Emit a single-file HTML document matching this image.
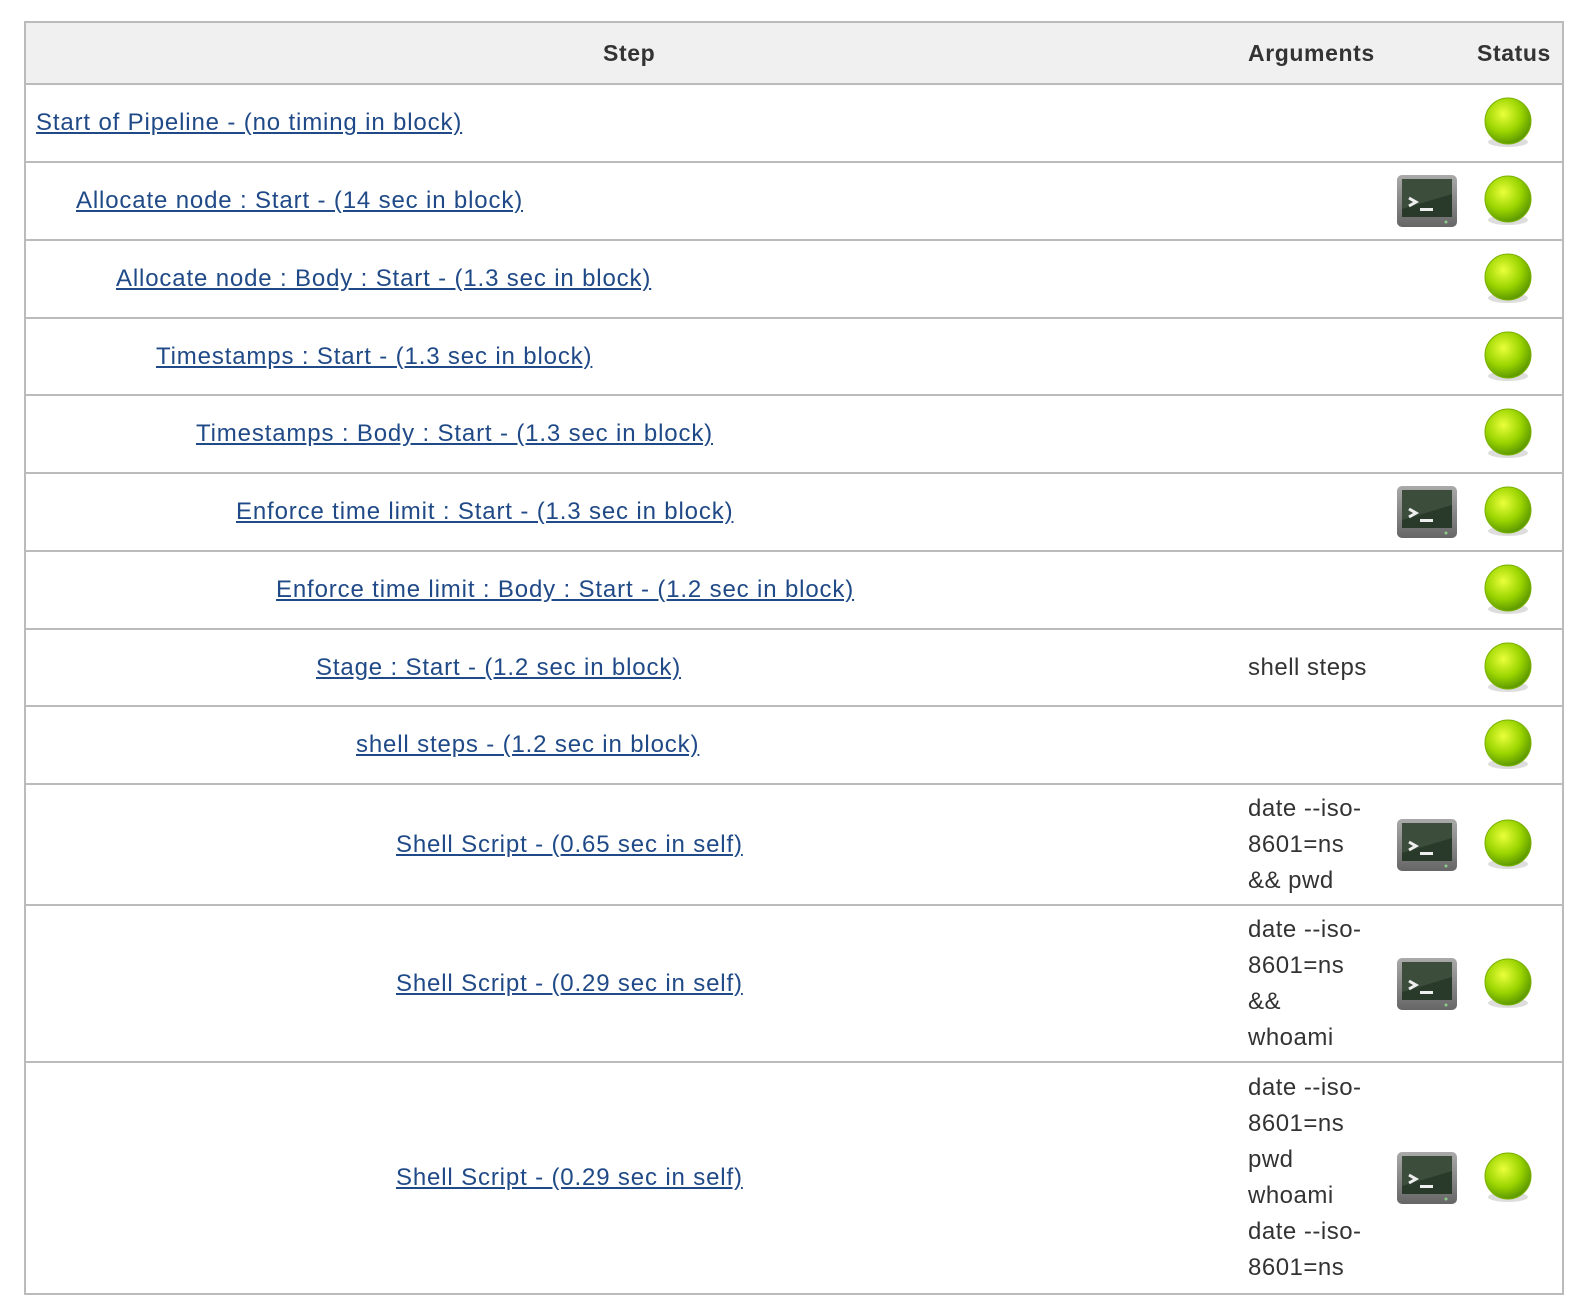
<!DOCTYPE html>
<html><head><meta charset="utf-8"><style>
body{margin:0;background:#fff;font-family:"Liberation Sans",sans-serif;}
.t{position:absolute;left:24px;top:21px;width:1536px;height:1270px;border:2px solid #bbb;box-sizing:content-box}
.hd{position:absolute;left:0;top:0;width:1536px;height:60px;background:#f0f0f0;border-bottom:2px solid #bbb;font-weight:bold;font-size:23px;color:#333;letter-spacing:0.6px}
.hd span{position:absolute;top:17px}
.r{position:absolute;left:0;width:1536px;border-bottom:2px solid #bbb}
.r a{position:absolute;color:#204a87;text-decoration:underline;font-size:24px;letter-spacing:0.85px;white-space:nowrap;transform:translateY(-50%);top:50%}
.args{position:absolute;left:1222px;font-size:24px;letter-spacing:0.5px;color:#333;line-height:36px;transform:translateY(-50%);top:50%}
.term{position:absolute;left:1370px;width:62px;height:54px;top:50%;margin-top:-27px}
.ball{position:absolute;left:1456px;width:52px;height:52px;top:50%;margin-top:-26px}
</style></head><body>
<svg width="0" height="0" style="position:absolute"><defs>
<radialGradient id="g" cx="0.4" cy="0.35" r="0.65"><stop offset="0" stop-color="#eaff3a"/><stop offset="0.6" stop-color="#9ad400"/><stop offset="1" stop-color="#5e9a00"/></radialGradient>
<linearGradient id="f" x1="0" y1="0" x2="0" y2="1"><stop offset="0" stop-color="#aaa"/><stop offset="1" stop-color="#666"/></linearGradient>
<symbol id="B" viewBox="0 0 52 52"><ellipse cx="26" cy="45" rx="20" ry="5" fill="#ddd"/><circle cx="26" cy="24" r="23" fill="url(#g)" stroke="#7ab000" stroke-width="1"/></symbol>
<symbol id="T" viewBox="0 0 62 54"><rect x="1" y="1" width="60" height="52" rx="5" fill="url(#f)"/><rect x="6" y="5" width="50" height="38" fill="#2a3a2a"/><path d="M6 5h50v15L6 35z" fill="#3c4d3c"/><path d="M13 24l7 4-7 4" stroke="#eee" stroke-width="3" fill="none"/><rect x="24" y="34" width="13" height="3" fill="#eee"/><circle cx="50" cy="48" r="1.5" fill="#8c8"/></symbol>
</defs></svg>
<div class="t">
<div class="hd"><span style="left:577px">Step</span><span style="left:1222px">Arguments</span><span style="left:1451px">Status</span></div>

<div class="r" style="top:62px;height:76px"><a href="#" style="left:10px">Start of Pipeline - (no timing in block)</a><svg class="ball"><use href="#B"/></svg></div>
<div class="r" style="top:140px;height:76px"><a href="#" style="left:50px">Allocate node : Start - (14 sec in block)</a><svg class="term"><use href="#T"/></svg><svg class="ball"><use href="#B"/></svg></div>
<div class="r" style="top:218px;height:76px"><a href="#" style="left:90px">Allocate node : Body : Start - (1.3 sec in block)</a><svg class="ball"><use href="#B"/></svg></div>
<div class="r" style="top:296px;height:75px"><a href="#" style="left:130px">Timestamps : Start - (1.3 sec in block)</a><svg class="ball"><use href="#B"/></svg></div>
<div class="r" style="top:373px;height:76px"><a href="#" style="left:170px">Timestamps : Body : Start - (1.3 sec in block)</a><svg class="ball"><use href="#B"/></svg></div>
<div class="r" style="top:451px;height:76px"><a href="#" style="left:210px">Enforce time limit : Start - (1.3 sec in block)</a><svg class="term"><use href="#T"/></svg><svg class="ball"><use href="#B"/></svg></div>
<div class="r" style="top:529px;height:76px"><a href="#" style="left:250px">Enforce time limit : Body : Start - (1.2 sec in block)</a><svg class="ball"><use href="#B"/></svg></div>
<div class="r" style="top:607px;height:75px"><a href="#" style="left:290px">Stage : Start - (1.2 sec in block)</a><div class="args">shell steps</div><svg class="ball"><use href="#B"/></svg></div>
<div class="r" style="top:684px;height:76px"><a href="#" style="left:330px">shell steps - (1.2 sec in block)</a><svg class="ball"><use href="#B"/></svg></div>
<div class="r" style="top:762px;height:119px"><a href="#" style="left:370px">Shell Script - (0.65 sec in self)</a><div class="args">date --iso-<br>8601=ns<br>&amp;&amp; pwd</div><svg class="term"><use href="#T"/></svg><svg class="ball"><use href="#B"/></svg></div>
<div class="r" style="top:883px;height:155px"><a href="#" style="left:370px">Shell Script - (0.29 sec in self)</a><div class="args">date --iso-<br>8601=ns<br>&amp;&amp;<br>whoami</div><svg class="term"><use href="#T"/></svg><svg class="ball"><use href="#B"/></svg></div>
<div class="r" style="top:1040px;height:230px;border-bottom:none"><a href="#" style="left:370px">Shell Script - (0.29 sec in self)</a><div class="args">date --iso-<br>8601=ns<br>pwd<br>whoami<br>date --iso-<br>8601=ns</div><svg class="term"><use href="#T"/></svg><svg class="ball"><use href="#B"/></svg></div>
</div>
</body></html>
